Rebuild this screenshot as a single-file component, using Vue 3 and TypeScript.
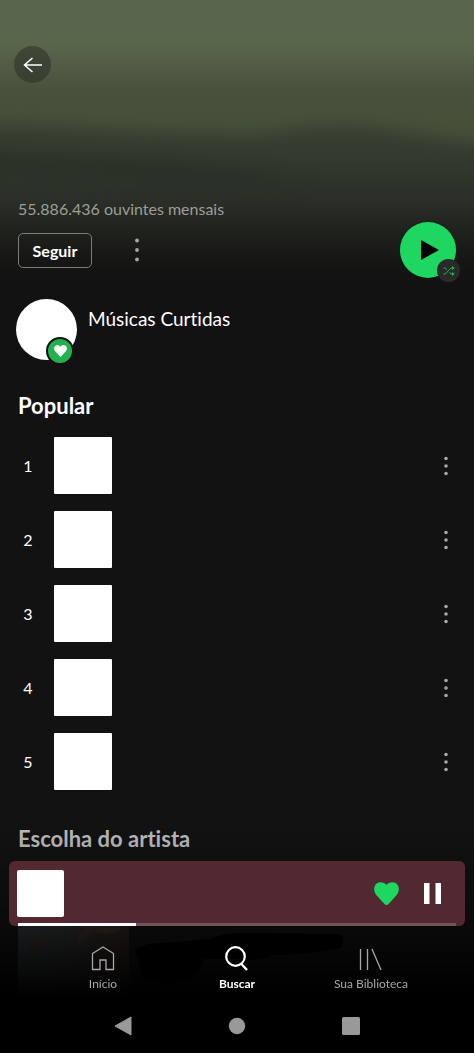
<script setup lang="ts">
interface Track {
  position: number
}

const tracks: Track[] = [1, 2, 3, 4, 5].map((position) => ({ position }))
const progress = 27
</script>

<template>
  <div class="screen">
    <header class="hero">
      <svg class="backdrop" viewBox="0 0 474 290" preserveAspectRatio="none" aria-hidden="true">
        <defs>
          <linearGradient id="sky" x1="0" y1="0" x2="0" y2="1">
            <stop offset="0" stop-color="#59674f" />
            <stop offset="0.15" stop-color="#5a664b" />
            <stop offset="0.22" stop-color="#525c46" />
            <stop offset="0.31" stop-color="#48513b" />
            <stop offset="0.5" stop-color="#465039" />
            <stop offset="1" stop-color="#465039" />
          </linearGradient>
          <linearGradient id="land" gradientUnits="userSpaceOnUse" x1="0" y1="120" x2="0" y2="280">
            <stop offset="0" stop-color="#3a4133" />
            <stop offset="0.3" stop-color="#30372d" />
            <stop offset="0.5" stop-color="#2a2f27" />
            <stop offset="0.7" stop-color="#1f211c" />
            <stop offset="0.88" stop-color="#151614" />
            <stop offset="1" stop-color="#121212" />
          </linearGradient>
          <filter id="soft" x="-20%" y="-40%" width="140%" height="180%" color-interpolation-filters="sRGB">
            <feGaussianBlur stdDeviation="14 8" />
          </filter>
        </defs>
        <rect width="474" height="290" fill="url(#sky)" />
        <path
          d="M-60 120 L40 124 L130 130 L260 134 L310 126 L360 125 L420 134 L474 143 L540 145 V360 H-60Z"
          fill="url(#land)"
          filter="url(#soft)"
        />
        <path
          d="M-40 148 L60 154 L170 160 L260 172 L300 186 L180 184 L60 176 L-40 174Z"
          fill="#282d25"
          opacity="0.6"
          filter="url(#soft)"
        />
      </svg>
      <button class="back" type="button" aria-label="Voltar">
        <svg viewBox="0 0 20 16" width="20" height="16" aria-hidden="true">
          <path d="M19 8H1.5M9.500 1L1.500 8L9.500 15" fill="none" stroke="#fff" stroke-width="1.5" />
        </svg>
      </button>
      <p class="listeners">55.886.436 ouvintes mensais</p>
      <div class="actions">
        <button class="follow" type="button">Seguir</button>
        <button class="more large" type="button" aria-label="Mais opções">
          <svg viewBox="0 0 4 24" width="4" height="24" aria-hidden="true">
            <circle cx="2" cy="2.5" r="1.9" /><circle cx="2" cy="12" r="1.9" /><circle cx="2" cy="21.5" r="1.9" />
          </svg>
        </button>
        <button class="play" type="button" aria-label="Tocar em ordem aleatória">
          <svg viewBox="0 0 18 20" width="18" height="20" aria-hidden="true">
            <path d="M0 0L18 10L0 20Z" fill="#000" />
          </svg>
          <span class="shuffle">
            <svg viewBox="0 0 12 10" width="12" height="10" aria-hidden="true">
              <path
                d="M0.5 8H2.2L8 2H10M0.5 2H2.2L4 3.7M6.4 6.4L8 8H10"
                fill="none"
                stroke="#21b253"
                stroke-width="1"
              />
              <path d="M9 0L11.8 2L9 4ZM9 6L11.8 8L9 10Z" fill="#21b253" />
            </svg>
          </span>
        </button>
      </div>
    </header>

    <main class="content">
      <a class="liked" href="#curtidas">
        <span class="avatar">
          <span class="badge">
            <svg viewBox="0 0 24 22" width="13" height="12" aria-hidden="true">
              <path
                d="M12 22L2.2 11.6C-0.8 8.2-.4 3.4 2.6 1.3C5.8-.9 9.8.2 12 3C14.2.2 18.2-.9 21.4 1.3C24.4 3.4 24.8 8.2 21.8 11.6Z"
                fill="#fff"
              />
            </svg>
          </span>
        </span>
        <span class="liked-title">Músicas Curtidas</span>
      </a>

      <section>
        <h2 class="heading">Popular</h2>
        <ol class="tracks">
          <li v-for="track in tracks" :key="track.position" class="track">
            <span class="number">{{ track.position }}</span>
            <span class="cover"></span>
            <button class="more" type="button" :aria-label="`Opções da faixa ${track.position}`">
              <svg viewBox="0 0 4 20" width="4" height="20" aria-hidden="true">
                <circle cx="2" cy="2.5" r="1.8" /><circle cx="2" cy="10" r="1.8" /><circle cx="2" cy="17.5" r="1.8" />
              </svg>
            </button>
          </li>
        </ol>
      </section>

      <section>
        <h2 class="heading pick">Escolha do artista</h2>
        <div class="pick-row">
          <svg class="pick-art" viewBox="0 0 111 111" width="111" height="111" aria-hidden="true">
            <defs>
              <linearGradient id="art" x1="0" y1="0" x2="1" y2="0">
                <stop offset="0" stop-color="#2b3134" />
                <stop offset="0.55" stop-color="#2a2a28" />
                <stop offset="1" stop-color="#291f1b" />
              </linearGradient>
              <filter id="smudge" x="-20%" y="-20%" width="140%" height="140%">
                <feGaussianBlur stdDeviation="1" />
              </filter>
            </defs>
            <rect width="111" height="111" fill="url(#art)" />
            <g filter="url(#smudge)">
              <path d="M13 52L17 47L30 46L31 49L22 52L15 58Z" fill="#3a2a22" />
              <path d="M59 45L68 32H104L100 38L88 42L76 39L66 45L60 52Z" fill="#3b2c25" />
            </g>
          </svg>
          <svg class="scribble" viewBox="0 0 212 56" width="212" height="56" aria-hidden="true">
            <path
              d="M2 20Q8 12 30 12L78 8Q90 1 112 2L206 3Q214 7 208 17L170 23L140 24Q130 30 112 28L70 28Q66 48 44 52Q14 54 8 42L6 30Z"
              fill="#000"
            />
          </svg>
        </div>
      </section>
    </main>

    <footer class="dock">
      <div class="player">
        <span class="now-cover"></span>
        <button class="control" type="button" aria-label="Remover das curtidas">
          <svg viewBox="0 0 24 22" width="25" height="23" aria-hidden="true">
            <path
              d="M12 22Q11 22 10 21L2.2 12.4C-0.8 8.8-.4 3.6 2.6 1.3C5.8-.9 9.8.2 12 2.6C14.2.2 18.2-.9 21.4 1.3C24.4 3.6 24.8 8.8 21.8 12.4L14 21Q13 22 12 22Z"
              fill="#1ed760"
            />
          </svg>
        </button>
        <button class="control" type="button" aria-label="Pausar">
          <svg viewBox="0 0 17 21" width="17" height="21" aria-hidden="true">
            <path d="M0 0H5.5V21H0ZM11.5 0H17V21H11.5Z" fill="#fff" />
          </svg>
        </button>
        <div class="progress"><div class="elapsed" :style="{ width: progress + '%' }"></div></div>
      </div>

      <nav class="tabs">
        <a class="tab" href="#inicio">
          <svg viewBox="0 0 24 26" width="24" height="26" aria-hidden="true">
            <path
              d="M1.5 8.5L12 2L22.5 8.5V24.5H15V15H9V24.5H1.5Z"
              fill="none"
              stroke="#a7a7a7"
              stroke-width="1.3"
            />
          </svg>
          Início
        </a>
        <a class="tab active" href="#buscar" aria-current="page">
          <svg viewBox="0 0 24 26" width="24" height="26" aria-hidden="true">
            <circle cx="10.5" cy="11.5" r="9.3" fill="none" stroke="#fff" stroke-width="2.2" />
            <path d="M16 18.5L22 25" stroke="#fff" stroke-width="2.4" />
          </svg>
          Buscar
        </a>
        <a class="tab" href="#biblioteca">
          <svg viewBox="0 0 24 26" width="24" height="26" aria-hidden="true">
            <path d="M1.5 4V25M8.5 4V25M13 4L22 25" fill="none" stroke="#a7a7a7" stroke-width="1.3" />
          </svg>
          Sua Biblioteca
        </a>
      </nav>

      <div class="system">
        <button type="button" aria-label="Voltar do sistema">
          <svg viewBox="0 0 18 20" width="18" height="20" aria-hidden="true">
            <path d="M17 1V19L1 10Z" fill="#999" stroke="#999" stroke-linejoin="round" />
          </svg>
        </button>
        <button type="button" aria-label="Tela inicial">
          <svg viewBox="0 0 18 18" width="18" height="18" aria-hidden="true"><circle cx="9" cy="9" r="8.2" fill="#999" /></svg>
        </button>
        <button type="button" aria-label="Aplicativos recentes">
          <svg viewBox="0 0 18 18" width="18" height="18" aria-hidden="true"><rect width="18" height="18" rx="1.5" fill="#999" /></svg>
        </button>
      </div>
    </footer>
  </div>
</template>

<style>
body {
  margin: 0;
  background: #121212;
}
</style>

<style scoped>
.screen {
  min-height: 100vh;
  background: #121212;
  color: #fff;
  font-family: Lato, "Liberation Sans", sans-serif;
  font-variant-ligatures: none;
}

button {
  display: flex;
  align-items: center;
  justify-content: center;
  margin: 0;
  padding: 0;
  border: 0;
  background: none;
  color: inherit;
  font: inherit;
}

a {
  color: inherit;
  text-decoration: none;
}

svg {
  display: block;
}

.hero {
  position: relative;
  padding: 46px 18px 12px;
}

.backdrop {
  position: absolute;
  inset: 0;
  width: 100%;
  height: 100%;
}

.back {
  position: relative;
  width: 37px;
  height: 37px;
  margin-left: -4px;
  border-radius: 50%;
  background: rgba(42, 48, 38, 0.55);
}

.listeners {
  position: relative;
  margin: 116px 0 3px;
  color: #9c9e9a;
  font-size: 16px;
  line-height: 20px;
}

.actions {
  position: relative;
  display: flex;
  align-items: center;
  height: 56px;
}

.follow {
  box-sizing: border-box;
  width: 74px;
  height: 35px;
  border: 1px solid #7c7c7a;
  border-radius: 5px;
  font-size: 16px;
  font-weight: 700;
}

.more {
  width: 20px;
  height: 40px;
  fill: #a7a7a7;
}

.large {
  margin-left: 35px;
}

.play {
  position: relative;
  width: 56px;
  height: 56px;
  margin-left: auto;
  border-radius: 50%;
  background: #1ed760;
}

.play > svg {
  margin-left: 4px;
}

.shuffle {
  position: absolute;
  right: -4px;
  bottom: -4px;
  display: flex;
  align-items: center;
  justify-content: center;
  width: 23px;
  height: 23px;
  border-radius: 50%;
  background: #2a2a2a;
}

.content {
  padding: 9px 18px 0;
}

.liked {
  display: flex;
  gap: 11px;
  margin-left: -2px;
}

.avatar {
  position: relative;
  width: 61px;
  height: 61px;
  border-radius: 50%;
  background: #fff;
}

.badge {
  position: absolute;
  right: 3px;
  bottom: -5px;
  display: flex;
  align-items: center;
  justify-content: center;
  width: 24px;
  height: 24px;
  border: 2px solid #121212;
  border-radius: 50%;
  background: #22b14f;
}

.liked-title {
  margin-top: 8px;
  font-size: 19px;
  line-height: 24px;
}

.heading {
  margin: 32px 0 17px;
  font-size: 22px;
  line-height: 28px;
  font-weight: 700;
}

.tracks {
  display: grid;
  gap: 17px;
  margin: 0;
  padding: 0;
  list-style: none;
}

.track {
  display: flex;
  align-items: center;
}

.number {
  width: 20px;
  margin-right: 16px;
  text-align: center;
  font-size: 16px;
  line-height: 20px;
}

.cover {
  width: 58px;
  height: 57px;
  border-radius: 1px;
  background: #fff;
}

.track .more {
  margin-left: auto;
}

.pick {
  margin: 35px 0 40px;
  color: #b9b9b9;
}

.pick-row {
  display: flex;
  gap: 4px;
}

.scribble {
  margin-top: 38px;
}

.dock {
  position: fixed;
  right: 0;
  bottom: 0;
  left: 0;
  padding: 32px 9px 0;
  background: linear-gradient(rgba(0, 0, 0, 0), rgba(0, 0, 0, 0.4) 42%, #000 76%);
}

.player {
  position: relative;
  display: flex;
  align-items: center;
  gap: 38px;
  height: 65px;
  padding: 0 24px 0 8px;
  border-radius: 6px;
  background: #532931;
}

.now-cover {
  width: 47px;
  height: 47px;
  margin-right: auto;
  border-radius: 2px;
  background: #fff;
}

.control + .control {
  margin-left: -13px;
}

.progress {
  position: absolute;
  right: 9px;
  bottom: 0;
  left: 9px;
  height: 3px;
  background: #75525a;
}

.elapsed {
  height: 100%;
  background: #fff;
}

.tabs {
  display: grid;
  grid-template-columns: repeat(3, 1fr);
  padding: 19px 27px 0;
}

.tab {
  display: flex;
  flex-direction: column;
  align-items: center;
  gap: 5px;
  color: #a7a7a7;
  font-size: 12px;
  line-height: 16px;
}

.active {
  color: #fff;
  font-weight: 700;
}

.system {
  display: grid;
  grid-template-columns: repeat(3, 1fr);
  height: 20px;
  padding: 24px 57px 17px;
}
</style>
